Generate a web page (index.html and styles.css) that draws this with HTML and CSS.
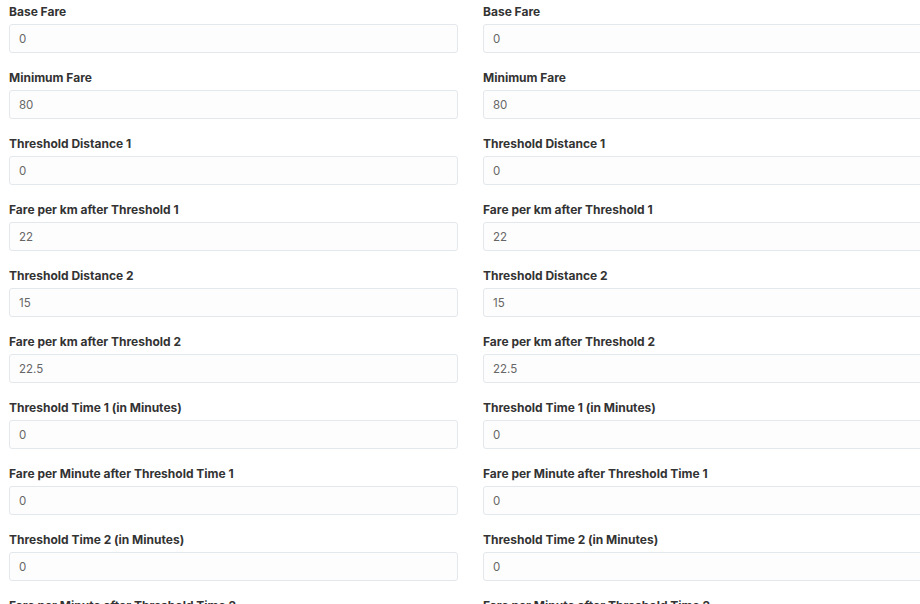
FILE: index.html
```html
<!DOCTYPE html>
<html lang="en">
<head>
  <meta charset="UTF-8" />
  <meta name="viewport" content="width=device-width, initial-scale=1.0"/>
  <title>Fare Settings</title>
  <link rel="stylesheet" href="styles.css">
</head>
<body>
  <div class="columns">
    <div class="fare-col">
      <div class="field"><label>Base Fare</label><input type="text" value="0" /></div>
      <div class="field"><label>Minimum Fare</label><input type="text" value="80" /></div>
      <div class="field"><label>Threshold Distance 1</label><input type="text" value="0" /></div>
      <div class="field"><label>Fare per km after Threshold 1</label><input type="text" value="22" /></div>
      <div class="field"><label>Threshold Distance 2</label><input type="text" value="15" /></div>
      <div class="field"><label>Fare per km after Threshold 2</label><input type="text" value="22.5" /></div>
      <div class="field"><label>Threshold Time 1 (in Minutes)</label><input type="text" value="0" /></div>
      <div class="field"><label>Fare per Minute after Threshold Time 1</label><input type="text" value="0" /></div>
      <div class="field"><label>Threshold Time 2 (in Minutes)</label><input type="text" value="0" /></div>
      <div class="field"><label>Fare per Minute after Threshold Time 2</label><input type="text" value="0" /></div>
    </div>
    <div class="fare-col">
      <div class="field"><label>Base Fare</label><input type="text" value="0" /></div>
      <div class="field"><label>Minimum Fare</label><input type="text" value="80" /></div>
      <div class="field"><label>Threshold Distance 1</label><input type="text" value="0" /></div>
      <div class="field"><label>Fare per km after Threshold 1</label><input type="text" value="22" /></div>
      <div class="field"><label>Threshold Distance 2</label><input type="text" value="15" /></div>
      <div class="field"><label>Fare per km after Threshold 2</label><input type="text" value="22.5" /></div>
      <div class="field"><label>Threshold Time 1 (in Minutes)</label><input type="text" value="0" /></div>
      <div class="field"><label>Fare per Minute after Threshold Time 1</label><input type="text" value="0" /></div>
      <div class="field"><label>Threshold Time 2 (in Minutes)</label><input type="text" value="0" /></div>
      <div class="field"><label>Fare per Minute after Threshold Time 2</label><input type="text" value="0" /></div>
    </div>
  </div>
</body>
</html>
```
FILE: styles.css
```css
body {
  margin: 0;
  font-family: Inter, "Liberation Sans", sans-serif;
  background: #fff;
  color: #333;
  overflow: hidden;
}

.columns {
  display: grid;
  grid-template-columns: 449px 449px;
  gap: 25px;
  padding: 4px 9px;
  width: 960px;
}

.field {
  margin-bottom: 17px;
}

label {
  display: block;
  font-size: 12px;
  font-weight: 700;
  line-height: 16px;
  margin-bottom: 4px;
  color: #333;
}

input {
  display: block;
  box-sizing: border-box;
  width: 100%;
  height: 29px;
  padding: 0 9px;
  border: 1px solid #e3e8ec;
  border-radius: 3px;
  background: #fdfdfd;
  font-family: Inter, "Liberation Sans", sans-serif;
  font-size: 11.5px;
  color: #666;
}
```
